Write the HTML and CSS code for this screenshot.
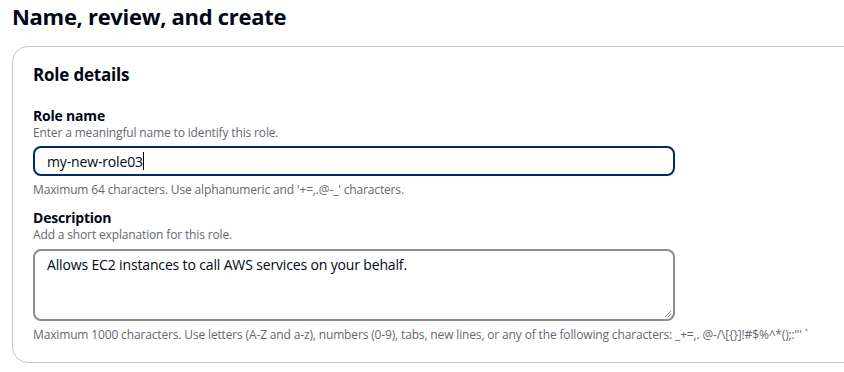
FILE: index.html
```html
<!DOCTYPE html>
<html>
<head>
<meta charset="utf-8">
<link rel="stylesheet" href="styles.css">
</head>
<body>
<h1 class="title">Name, review, and create</h1>
<section class="card">
  <h2 class="card-title">Role details</h2>
  <div class="field">
    <div class="label">Role name</div>
    <div class="desc">Enter a meaningful name to identify this role.</div>
    <div class="input focused"><span class="value">my-new-role03</span><span class="caret"></span></div>
    <div class="constraint">Maximum 64 characters. Use alphanumeric and '+=,.@-_' characters.</div>
  </div>
  <div class="field">
    <div class="label">Description</div>
    <div class="desc">Add a short explanation for this role.</div>
    <div class="textarea"><span class="value">Allows EC2 instances to call AWS services on your behalf.</span>
      <svg class="grip" width="8" height="8" viewBox="0 0 8 8"><path d="M7 1L1 7M7 4L4 7M7 6.5L6.5 7" stroke="#8c8c94" stroke-width="1" fill="none"/></svg>
    </div>
    <div class="constraint">Maximum 1000 characters. Use letters (A-Z and a-z), numbers (0-9), tabs, new lines, or any of the following characters: _+=,. @-/\[{}]!#$%^*();:"' `</div>
  </div>
</section>
</body>
</html>
```

FILE: styles.css
```css
* { box-sizing: border-box; }
body {
  margin: 0;
  padding: 0 0 0 12px;
  font-family: "Open Sans", "Noto Sans", sans-serif;
  color: #000716;
  background: #fff;
  overflow: hidden;
}
.title {
  margin: 0;
  padding-top: 1px;
  font-size: 22px;
  line-height: 30px;
  font-weight: 700;
  letter-spacing: -0.3px;
}
.card {
  margin-top: 15px;
  width: 860px;
  border: 1px solid #c6c6cd;
  border-radius: 16px;
  padding: 16px 20px 19px 20px;
}
.card-title {
  margin: 0;
  font-size: 17px;
  line-height: 24px;
  font-weight: 700;
  letter-spacing: -0.2px;
}
.field { margin-top: 20px; }
.field + .field { margin-top: 11px; }
.label {
  font-size: 14px;
  line-height: 18px;
  font-weight: 700;
  letter-spacing: -0.2px;
}
.desc, .constraint {
  font-size: 12px;
  line-height: 16px;
  color: #656871;
  letter-spacing: -0.15px;
}
.constraint { margin-top: 6px; }
.input, .textarea {
  margin-top: 6px;
  width: 642px;
  border-radius: 8px;
  font-size: 14px;
  letter-spacing: -0.15px;
  padding: 0 12px;
}
.input {
  margin-top: 5px;
  height: 30px;
  border: 2px solid #002b66;
  display: flex;
  align-items: center;
}
.caret {
  display: inline-block;
  width: 1px;
  height: 18px;
  background: #000716;
}
.textarea {
  position: relative;
  height: 72px;
  border: 2px solid #8c8c94;
  padding-top: 4px;
  line-height: 20px;
}
.grip {
  position: absolute;
  right: 1px;
  bottom: 1px;
}
```
